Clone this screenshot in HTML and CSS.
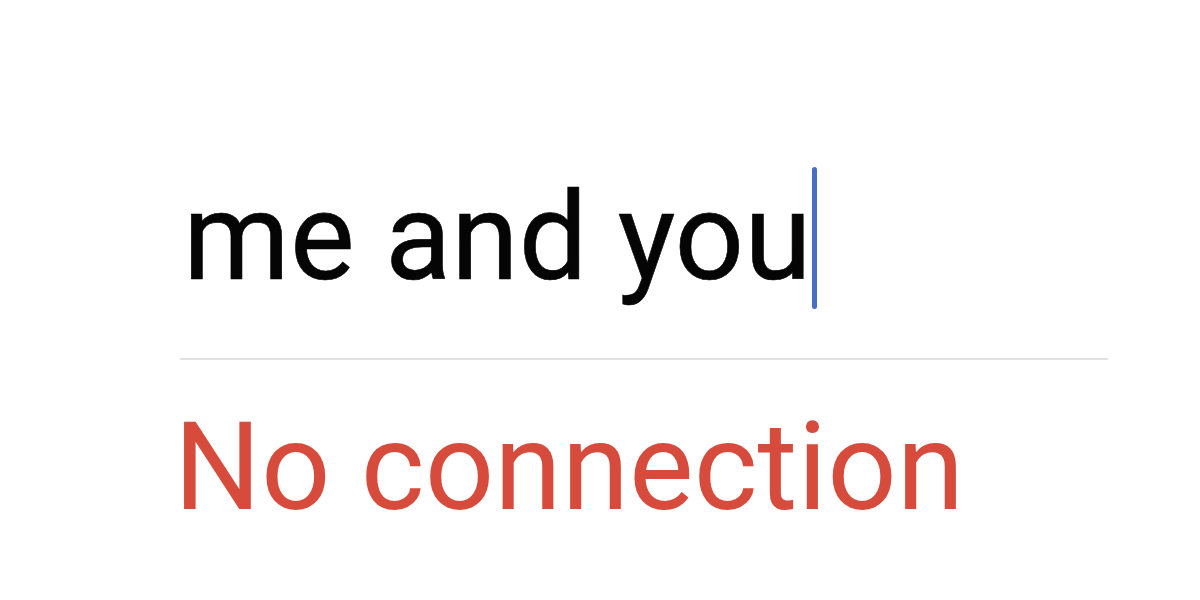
FILE: index.html
```html
<!DOCTYPE html>
<html>
<head>
<meta charset="utf-8">
<link rel="stylesheet" href="styles.css">
</head>
<body>
<div class="page">
  <div class="field">
    <div class="input"><span class="value">me and you</span><span class="caret"></span></div>
    <div class="underline"></div>
    <div class="error">No connection</div>
  </div>
</div>
</body>
</html>
```
FILE: styles.css
```css
html, body {
  margin: 0;
  padding: 0;
  background: #ffffff;
}
.page {
  width: 1200px;
  height: 600px;
  box-sizing: border-box;
  padding: 166px 92px 0 180px;
  font-family: Roboto, "Noto Sans", sans-serif;
}
.field {
  display: flex;
  flex-direction: column;
}
.input {
  display: flex;
  align-items: center;
  height: 144px;
}
.value {
  font-size: 122px;
  line-height: 144px;
  color: #050505;
  margin-left: 3px;
  -webkit-text-stroke: 0.6px #050505;
}
.caret {
  width: 5px;
  height: 142px;
  background: #4a6dc6;
  border-radius: 2.5px;
  margin-left: 1px;
}
.underline {
  height: 2px;
  background: #e2e2e2;
  margin-top: 48px;
}
.error {
  font-size: 122px;
  line-height: 140px;
  color: #d64b3c;
  margin-top: 38px;
  margin-left: -6px;
}
```
